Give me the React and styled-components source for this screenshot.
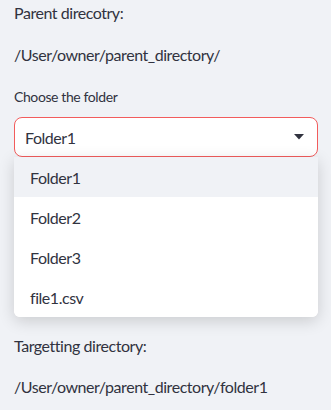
import React from "react";
import styled, { createGlobalStyle } from "styled-components";

const Global = createGlobalStyle`
  html, body { margin: 0; padding: 0; background: #f0f2f6; }
  body { font-family: "Lato", "Noto Sans", sans-serif; color: #31333f; letter-spacing: -0.45px; }
`;

const Page = styled.div`
  width: 331px;
  height: 410px;
  box-sizing: border-box;
  padding: 0 13px 0 14px;
  overflow: hidden;
`;

const Text = styled.p`
  margin: 0;
  margin-top: ${(p) => p.$top || 0}px;
  font-size: 16px;
  line-height: 26px;
  white-space: nowrap;
`;

const Label = styled.div`
  margin-top: 19px;
  font-size: 14px;
  line-height: 20px;
  letter-spacing: -0.4px;
`;

const SelectWrap = styled.div`
  position: relative;
  margin-top: 10px;
`;

const SelectBox = styled.div`
  height: 40px;
  box-sizing: border-box;
  border: 1px solid #f25c5c;
  border-radius: 8px;
  background: #ffffff;
  display: flex;
  align-items: center;
  justify-content: space-between;
  padding: 0 13px 0 10px;
  font-size: 16px;
`;

const Caret = styled.svg`
  width: 10px;
  height: 6px;
  display: block;
`;

const Menu = styled.ul`
  position: absolute;
  top: 100%;
  left: 0;
  right: 0;
  margin: 0;
  padding: 0;
  list-style: none;
  background: #ffffff;
  border-radius: 0 0 6px 6px;
  box-shadow: 0 4px 16px rgba(0, 0, 0, 0.16);
  overflow: hidden;
`;

const Item = styled.li`
  height: 40px;
  display: flex;
  align-items: center;
  padding-left: 16px;
  font-size: 16px;
  background: ${(p) => (p.$active ? "#f0f2f6" : "#ffffff")};
`;

export default function App() {
  const options = ["Folder1", "Folder2", "Folder3", "file1.csv"];
  return (
    <>
      <Global />
      <Page>
        <Text>Parent direcotry:</Text>
        <Text $top={16}>/User/owner/parent_directory/</Text>
        <Label>Choose the folder</Label>
        <SelectWrap>
          <SelectBox>
            <span>Folder1</span>
            <Caret viewBox="0 0 10 6">
              <path d="M0 0 L10 0 L5 5.5 Z" fill="#31333f" />
            </Caret>
          </SelectBox>
          <Menu>
            {options.map((o, i) => (
              <Item key={o} $active={i === 0}>
                {o}
              </Item>
            ))}
          </Menu>
        </SelectWrap>
        <Text $top={176}>Targetting directory:</Text>
        <Text $top={15}>/User/owner/parent_directory/folder1</Text>
      </Page>
    </>
  );
}
